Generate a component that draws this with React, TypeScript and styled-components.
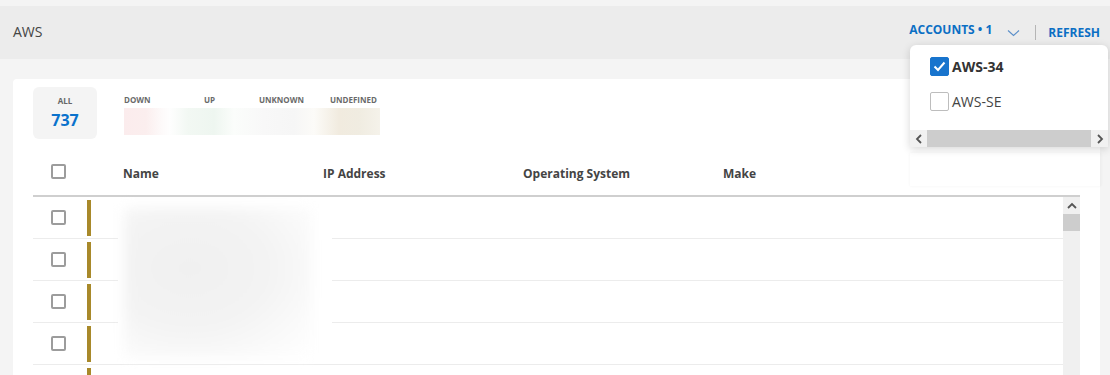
import React from "react"
import styled, { createGlobalStyle } from "styled-components"

const GlobalStyle = createGlobalStyle`
    body {
        margin: 0;
        background: #f4f4f4;
        font-family: "Open Sans", "Liberation Sans", sans-serif;
        color: #444;
    }
`

const accounts = [
    { name: "AWS-34", checked: true },
    { name: "AWS-SE", checked: false }
]

const statuses = [
    { label: "DOWN", width: 80 },
    { label: "UP", width: 55 },
    { label: "UNKNOWN", width: 71 },
    { label: "UNDEFINED", width: 60 }
]

const columns = ["Name", "IP Address", "Operating System", "Make"]

const rows = [1, 2, 3, 4, 5]

export default function App() {
    return (
        <>
            <GlobalStyle />
            <Page>
                <Header>
                    <Title>AWS</Title>
                    <Actions>
                        <AccountsButton>ACCOUNTS • 1</AccountsButton>
                        <Chevron width={13} height={8} viewBox="0 0 13 8">
                            <polyline points="1,1.5 6.5,6.5 12,1.5" fill="none" stroke="#5b8fc9" strokeWidth={1.1} />
                        </Chevron>
                        <Divider />
                        <RefreshButton>REFRESH</RefreshButton>
                    </Actions>
                    <Dropdown>
                        <AccountList>
                            {accounts.map(a => (
                                <AccountItem key={a.name}>
                                    <AccountBox $checked={a.checked}>
                                        {a.checked && (
                                            <svg width={15} height={15} viewBox="0 0 15 15">
                                                <polyline
                                                    points="2.5,7.5 6,11 12.5,3.5"
                                                    fill="none"
                                                    stroke="#fff"
                                                    strokeWidth={2}
                                                />
                                            </svg>
                                        )}
                                    </AccountBox>
                                    <AccountName $checked={a.checked}>{a.name}</AccountName>
                                </AccountItem>
                            ))}
                        </AccountList>
                        <HScroll>
                            <ScrollArrow>
                                <svg width={8} height={10} viewBox="0 0 8 10">
                                    <polyline points="6,1 2,5 6,9" fill="none" stroke="#555" strokeWidth={1.8} />
                                </svg>
                            </ScrollArrow>
                            <HThumb />
                            <ScrollArrow>
                                <svg width={8} height={10} viewBox="0 0 8 10">
                                    <polyline points="2,1 6,5 2,9" fill="none" stroke="#555" strokeWidth={1.8} />
                                </svg>
                            </ScrollArrow>
                        </HScroll>
                    </Dropdown>
                    <DropdownGhost />
                </Header>
                <Content>
                    <Card>
                        <Summary>
                            <AllTile>
                                <TileLabel>ALL</TileLabel>
                                <TileCount>737</TileCount>
                            </AllTile>
                            <StatusGroup>
                                <StatusLabels>
                                    {statuses.map(s => (
                                        <StatusLabel key={s.label} style={{ width: s.width }}>
                                            {s.label}
                                        </StatusLabel>
                                    ))}
                                </StatusLabels>
                                <StatusStrip />
                            </StatusGroup>
                        </Summary>
                        <HeadRow>
                            <CheckCell>
                                <Checkbox />
                            </CheckCell>
                            <span />
                            {columns.map(c => (
                                <HeadCell key={c}>{c}</HeadCell>
                            ))}
                        </HeadRow>
                        <Body>
                            <Rows>
                                {rows.map(r => (
                                    <Row key={r}>
                                        <CheckCell>
                                            <Checkbox />
                                        </CheckCell>
                                        <StatusBar />
                                    </Row>
                                ))}
                                <BlurredNames />
                            </Rows>
                            <VScroll>
                                <VArrow>
                                    <svg width={10} height={7} viewBox="0 0 10 7">
                                        <polyline points="1,6 5,2 9,6" fill="none" stroke="#555" strokeWidth={1.8} />
                                    </svg>
                                </VArrow>
                                <VThumb />
                            </VScroll>
                        </Body>
                    </Card>
                </Content>
            </Page>
        </>
    )
}

const Page = styled.div`
    padding-top: 6px;
    height: 369px;
    overflow: hidden;
`

const Header = styled.header`
    position: relative;
    height: 53px;
    background: #ececec;
    display: flex;
    align-items: center;
    justify-content: space-between;
    padding: 0 10px 0 13px;
`

const Title = styled.div`
    font-size: 14px;
    color: #444;
    margin-top: -2px;
`

const Actions = styled.div`
    display: flex;
    align-items: center;
`

const AccountsButton = styled.span`
    font-size: 12px;
    font-weight: 700;
    color: #0b6fc4;
    margin-top: -6px;
`

const Chevron = styled.svg`
    margin: 0 15px 0 15px;
`

const Divider = styled.span`
    width: 1px;
    height: 15px;
    background: #b5b5b5;
    margin-right: 12px;
`

const RefreshButton = styled.span`
    font-size: 12px;
    font-weight: 700;
    color: #0b6fc4;
    margin-top: 0;
`

const Dropdown = styled.div`
    position: absolute;
    top: 39px;
    left: 910px;
    width: 198px;
    background: #fff;
    border-radius: 6px 6px 0 0;
    box-shadow: 0 2px 8px rgba(0, 0, 0, 0.16);
    z-index: 3;
    overflow: hidden;
`

const DropdownGhost = styled.div`
    position: absolute;
    top: 147px;
    left: 910px;
    width: 190px;
    height: 33px;
    background: #fff;
    border-right: 1px solid #eee;
    box-shadow: 0 0 3px rgba(0, 0, 0, 0.05);
    z-index: 2;
`

const AccountList = styled.div`
    display: flex;
    flex-direction: column;
    gap: 16px;
    padding: 12px 20px 19px;
`

const AccountItem = styled.div`
    display: flex;
    align-items: center;
    gap: 3px;
    height: 19px;
`

const AccountBox = styled.span<{ $checked?: boolean }>`
    box-sizing: border-box;
    width: 19px;
    height: 19px;
    border-radius: 2px;
    display: flex;
    align-items: center;
    justify-content: center;
    background: ${p => (p.$checked ? "#1874cd" : "#fff")};
    border: 1px solid ${p => (p.$checked ? "#1874cd" : "#bdbdbd")};
`

const AccountName = styled.span<{ $checked?: boolean }>`
    font-size: 14px;
    font-weight: ${p => (p.$checked ? 700 : 400)};
    color: ${p => (p.$checked ? "#333" : "#444")};
`

const HScroll = styled.div`
    display: flex;
    height: 17px;
    background: #f1f1f1;
`

const ScrollArrow = styled.span`
    width: 17px;
    display: flex;
    align-items: center;
    justify-content: center;
`

const HThumb = styled.span`
    flex: 1;
    background: #cdcdcd;
`

const Content = styled.main`
    padding: 20px 10px 0 13px;
`

const Card = styled.section`
    background: #fff;
    border-radius: 4px;
    padding: 8px 20px 0;
    height: 300px;
`

const Summary = styled.div`
    display: flex;
    align-items: flex-start;
    gap: 27px;
`

const AllTile = styled.div`
    width: 64px;
    height: 52px;
    border-radius: 6px;
    background: #f4f4f4;
    display: flex;
    flex-direction: column;
    align-items: center;
    padding-top: 9px;
    box-sizing: border-box;
`

const TileLabel = styled.span`
    font-size: 8px;
    font-weight: 700;
    color: #666;
    line-height: 10px;
`

const TileCount = styled.span`
    font-size: 16px;
    font-weight: 700;
    color: #0a72cc;
    line-height: 22px;
    margin-top: 3px;
`

const StatusGroup = styled.div`
    padding-top: 8px;
`

const StatusLabels = styled.div`
    display: flex;
`

const StatusLabel = styled.span`
    font-size: 8px;
    font-weight: 700;
    color: #6a6a6a;
    line-height: 10px;
`

const StatusStrip = styled.div`
    margin-top: 3px;
    width: 256px;
    height: 27px;
    background: linear-gradient(
        90deg,
        #fbeced 0px,
        #fbeeee 22px,
        #fdfafa 38px,
        #fefefe 46px,
        #f2f8f3 64px,
        #eef6f0 90px,
        #fbfdfb 110px,
        #f8f8f8 140px,
        #f6f6f6 170px,
        #fcfbf8 190px,
        #f1ebdf 215px,
        #f0ece1 235px,
        #f5f2ea 256px
    );
`

const rowGrid = `
    display: grid;
    grid-template-columns: 54px 31px 200px 200px 200px 1fr;
    align-items: center;
    box-sizing: border-box;
`

const HeadRow = styled.div`
    ${rowGrid};
    height: 58px;
    padding-top: 9px;
    border-bottom: 2px solid #cfcfcf;
`

const HeadCell = styled.span`
    font-size: 12px;
    font-weight: 700;
    color: #444;
    padding-left: 5px;
    margin-top: 3px;
`

const CheckCell = styled.span`
    padding-left: 18px;
    display: flex;
`

const Checkbox = styled.span`
    box-sizing: border-box;
    width: 15px;
    height: 15px;
    border: 2px solid #9c9c9c;
    border-radius: 2px;
`

const Body = styled.div`
    display: flex;
`

const Rows = styled.div`
    position: relative;
    flex: 1;
`

const Row = styled.div`
    ${rowGrid};
    height: 42px;
    border-bottom: 1px solid #ececec;
`

const StatusBar = styled.span`
    width: 4px;
    height: 36px;
    margin-top: 1px;
    background: #a8892a;
`

const BlurredNames = styled.div`
    position: absolute;
    left: 85px;
    top: 7px;
    width: 214px;
    height: 158px;
    background: #fff;
    &::before {
        content: "";
        position: absolute;
        inset: 4px 20px 4px 6px;
        background: radial-gradient(ellipse at 35% 40%, #f0f0f0 0%, #f3f3f3 45%, #fafafa 75%, #fff 100%);
        filter: blur(6px);
    }
`

const VScroll = styled.div`
    width: 17px;
    height: 190px;
    background: #f0f0f0;
    display: flex;
    flex-direction: column;
`

const VArrow = styled.span`
    height: 17px;
    display: flex;
    align-items: center;
    justify-content: center;
`

const VThumb = styled.span`
    height: 17px;
    background: #cdcdcd;
`
